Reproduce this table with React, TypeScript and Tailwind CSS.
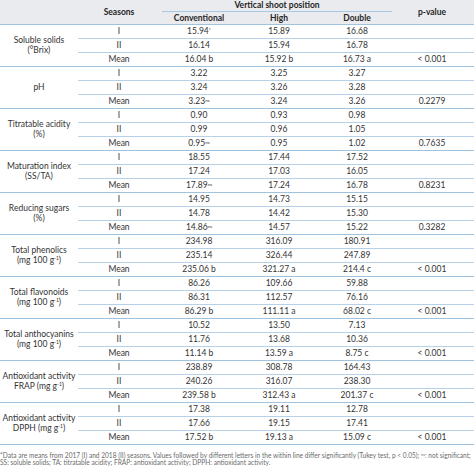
import React from 'react'

type Group = {
  label: React.ReactNode
  rows: React.ReactNode[][]
  p: string
}

const ns = <sup className="text-[4.5px] leading-none">ns</sup>
const inv = <sup className="text-[5px] leading-none">-1</sup>

const groups: Group[] = [
  {
    label: <>Soluble solids<br />(°Brix)</>,
    rows: [
      [<>15.94<sup className="text-[5px] leading-none">*</sup></>, '15.89', '16.68'],
      ['16.14', '15.94', '16.78'],
      ['16.04 b', '15.92 b', '16.73 a'],
    ],
    p: '< 0.001',
  },
  {
    label: 'pH',
    rows: [
      ['3.22', '3.25', '3.27'],
      ['3.24', '3.26', '3.28'],
      [<>3.23{ns}</>, '3.24', '3.26'],
    ],
    p: '0.2279',
  },
  {
    label: <>Titratable acidity<br />(%)</>,
    rows: [
      ['0.90', '0.93', '0.98'],
      ['0.99', '0.96', '1.05'],
      [<>0.95{ns}</>, '0.95', '1.02'],
    ],
    p: '0.7635',
  },
  {
    label: <>Maturation index<br />(SS/TA)</>,
    rows: [
      ['18.55', '17.44', '17.52'],
      ['17.24', '17.03', '16.05'],
      [<>17.89{ns}</>, '17.24', '16.78'],
    ],
    p: '0.8231',
  },
  {
    label: <>Reducing sugars<br />(%)</>,
    rows: [
      ['14.95', '14.73', '15.15'],
      ['14.78', '14.42', '15.30'],
      [<>14.86{ns}</>, '14.57', '15.22'],
    ],
    p: '0.3282',
  },
  {
    label: <>Total phenolics<br />(mg 100 g{inv})</>,
    rows: [
      ['234.98', '316.09', '180.91'],
      ['235.14', '326.44', '247.89'],
      ['235.06 b', '321.27 a', '214.4 c'],
    ],
    p: '< 0.001',
  },
  {
    label: <>Total flavonoids<br />(mg 100 g{inv})</>,
    rows: [
      ['86.26', '109.66', '59.88'],
      ['86.31', '112.57', '76.16'],
      ['86.29 b', '111.11 a', '68.02 c'],
    ],
    p: '< 0.001',
  },
  {
    label: <>Total anthocyanins<br />(mg 100 g{inv})</>,
    rows: [
      ['10.52', '13.50', '7.13'],
      ['11.76', '13.68', '10.36'],
      ['11.14 b', '13.59 a', '8.75 c'],
    ],
    p: '< 0.001',
  },
  {
    label: <>Antioxidant activity<br />FRAP (mg g{inv})</>,
    rows: [
      ['238.89', '308.78', '164.43'],
      ['240.26', '316.07', '238.30'],
      ['239.58 b', '312.43 a', '201.37 c'],
    ],
    p: '< 0.001',
  },
  {
    label: <>Antioxidant activity<br />DPPH (mg g{inv})</>,
    rows: [
      ['17.38', '19.11', '12.78'],
      ['17.66', '19.15', '17.41'],
      ['17.52 b', '19.13 a', '15.09 c'],
    ],
    p: '< 0.001',
  },
]

const seasons = ['I', 'II', 'Mean']

export default function App() {
  return (
    <main
      className="w-[474px] h-[467px] overflow-hidden bg-white text-[#333] text-[8.5px]"
      style={{ fontFamily: 'Lato, "Open Sans", sans-serif' }}
    >
      <div className="flex h-[25px] bg-[#e9ebee] border-b border-[#9fc3df] font-bold text-[#262626]">
        <div className="w-[78px]"></div>
        <div className="w-[82px] flex items-center justify-center">Seasons</div>
        <div className="w-[234px] flex flex-col">
          <div className="h-[12px] flex items-center justify-center border-b border-[#a9c9e2] mx-[2px]">
            Vertical shoot position
          </div>
          <div className="flex-1 grid grid-cols-[78px_82px_74px] items-center text-center">
            <div>Conventional</div>
            <div>High</div>
            <div>Double</div>
          </div>
        </div>
        <div className="w-[76px] flex items-center justify-center">p-value</div>
      </div>

      {groups.map((g, gi) => (
        <div key={gi} className="flex h-[42px] border-b border-[#9fc3df]">
          <div className="w-[78px] flex items-center justify-center">
            <div className="text-center leading-[9.5px] whitespace-nowrap">{g.label}</div>
          </div>
          <div className="flex-1 flex flex-col">
            {g.rows.map((r, ri) => (
              <div
                key={ri}
                className={
                  ri < 2
                    ? 'h-[14px] grid grid-cols-[82px_78px_82px_74px_76px] items-center text-center border-b border-[#b7d2e8]'
                    : 'flex-1 grid grid-cols-[82px_78px_82px_74px_76px] items-center text-center'
                }
              >
                <div>{seasons[ri]}</div>
                <div>{r[0]}</div>
                <div>{r[1]}</div>
                <div>{r[2]}</div>
                <div>{ri === 2 ? g.p : ''}</div>
              </div>
            ))}
          </div>
        </div>
      ))}

      <p className="mt-[7px] text-[6.6px] leading-[7px] text-[#6b6b6b] whitespace-nowrap">
        *Data are means from 2017 (I) and 2018 (II) seasons. Values followed by different letters in the within line differ significantly (Tukey test, p &lt; 0.05);{' '}
        <sup className="text-[4px]">ns</sup>: not significant;
        <br />
        SS: soluble solids; TA: titratable acidity; FRAP: antioxidant activity; DPPH: antioxidant activity.
      </p>
    </main>
  )
}
